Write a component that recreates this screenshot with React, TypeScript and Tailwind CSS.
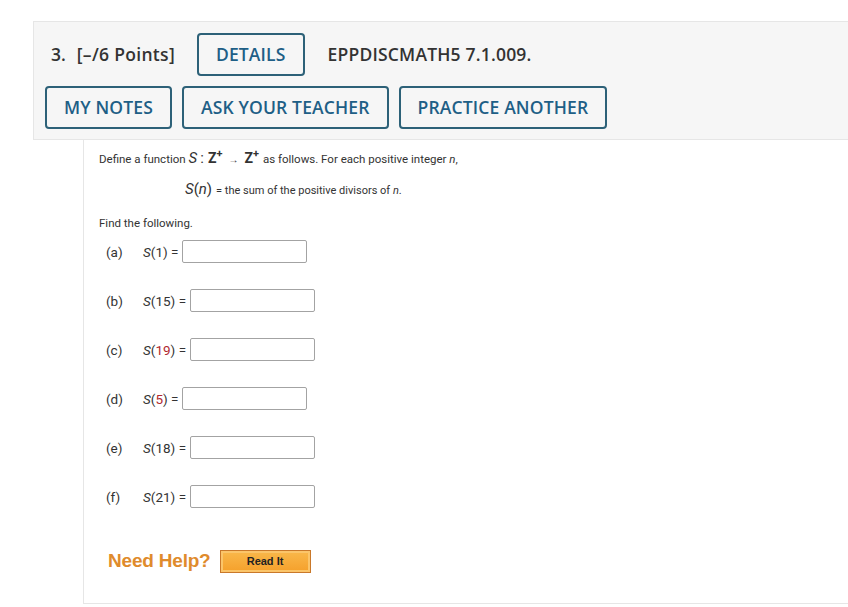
import React from 'react'

const parts = [
  { label: '(a)', arg: '1', red: false },
  { label: '(b)', arg: '15', red: false },
  { label: '(c)', arg: '19', red: true },
  { label: '(d)', arg: '5', red: true },
  { label: '(e)', arg: '18', red: false },
  { label: '(f)', arg: '21', red: false },
]

function OutlineButton({ children }: { children: React.ReactNode }) {
  return (
    <div className="h-[43px] px-[17px] flex items-center border-2 border-[#2d6178] rounded-[4px] text-[#1e5f86] text-[17.5px] font-semibold tracking-[0.15px]">
      {children}
    </div>
  )
}

export default function App() {
  return (
    <div className="w-[848px] h-[607px] bg-white overflow-hidden" style={{ fontFamily: '"Open Sans", sans-serif' }}>
      <div className="pt-[21px] pl-[33px]">
        {/* header */}
        <div className="bg-[#f6f6f6] border border-[#e6e6e6] border-r-0 pt-[11px] pb-[10px] pl-[11px]">
          <div className="flex items-center h-[43px]">
            <span className="ml-[6px] text-[17.5px] font-semibold text-[#333]">3.</span>
            <span className="ml-[11px] text-[17.5px] font-semibold text-[#333] tracking-[0.3px]">[–/6 Points]</span>
            <div className="ml-[22px]">
              <OutlineButton>DETAILS</OutlineButton>
            </div>
            <span className="ml-[23px] text-[17.5px] font-semibold text-[#333] tracking-[0.2px]">EPPDISCMATH5 7.1.009.</span>
          </div>
          <div className="flex items-center gap-[10px] mt-[10px]">
            <OutlineButton>MY NOTES</OutlineButton>
            <OutlineButton>ASK YOUR TEACHER</OutlineButton>
            <OutlineButton>PRACTICE ANOTHER</OutlineButton>
          </div>
        </div>

        {/* question body */}
        <div className="ml-[50px] h-[464px] border-l border-b border-[#e6e6e6] pl-[15px] pt-[7px] text-[#333]" style={{ fontFamily: 'Roboto, sans-serif' }}>
          <div className="flex items-baseline text-[11.5px]">
            <span>Define a function</span>
            <span className="ml-[3px] text-[15px] italic">S</span>
            <span className="ml-[3px] text-[15px]">:</span>
            <span className="ml-[4px] text-[14px] font-bold">Z</span>
            <span className="text-[11px] font-bold relative -top-[6px]">+</span>
            <span className="ml-[6px] text-[10px]">→</span>
            <span className="ml-[6px] text-[14px] font-bold">Z</span>
            <span className="text-[11px] font-bold relative -top-[6px]">+</span>
            <span className="ml-[4px]">as follows. For each positive integer <i>n</i>,</span>
          </div>
          <div className="flex items-baseline text-[11px] ml-[86px] mt-[8px]">
            <span className="text-[15px]"><i>S</i>(<i>n</i>)</span>
            <span className="ml-[4px]">= the sum of the positive divisors of <i>n</i>.</span>
          </div>
          <div className="text-[11.5px] mt-[15px]">Find the following.</div>

          <div className="mt-[8px] flex flex-col gap-[26px]">
            {parts.map((p) => (
              <div key={p.label} className="flex items-center h-[23px] text-[13.5px]">
                <span className="ml-[7px] w-[37px]">{p.label}</span>
                <span>
                  <i>S</i>(<span className={p.red ? 'text-[#b0282f]' : ''}>{p.arg}</span>) =
                </span>
                <div className="w-[125px] h-[23px] ml-[4px] border border-[#a3a3a3] rounded-[2px] bg-white" />
              </div>
            ))}
          </div>

          <div className="mt-[39px] ml-[9px] flex items-center">
            <span className="text-[19px] font-bold text-[#df8b2c] tracking-[-0.2px]" style={{ fontFamily: '"Liberation Sans", Arial, sans-serif' }}>
              Need Help?
            </span>
            <div
              className="ml-[9px] w-[91px] h-[23px] flex items-center justify-center border border-[#c9782a] bg-gradient-to-b from-[#f9b84a] to-[#f5a02a] shadow-[inset_0_0_0_2px_#fbc56a] text-[11px] font-bold text-[#222]"
              style={{ fontFamily: '"Liberation Sans", Arial, sans-serif' }}
            >
              Read It
            </div>
          </div>
        </div>
      </div>
    </div>
  )
}
